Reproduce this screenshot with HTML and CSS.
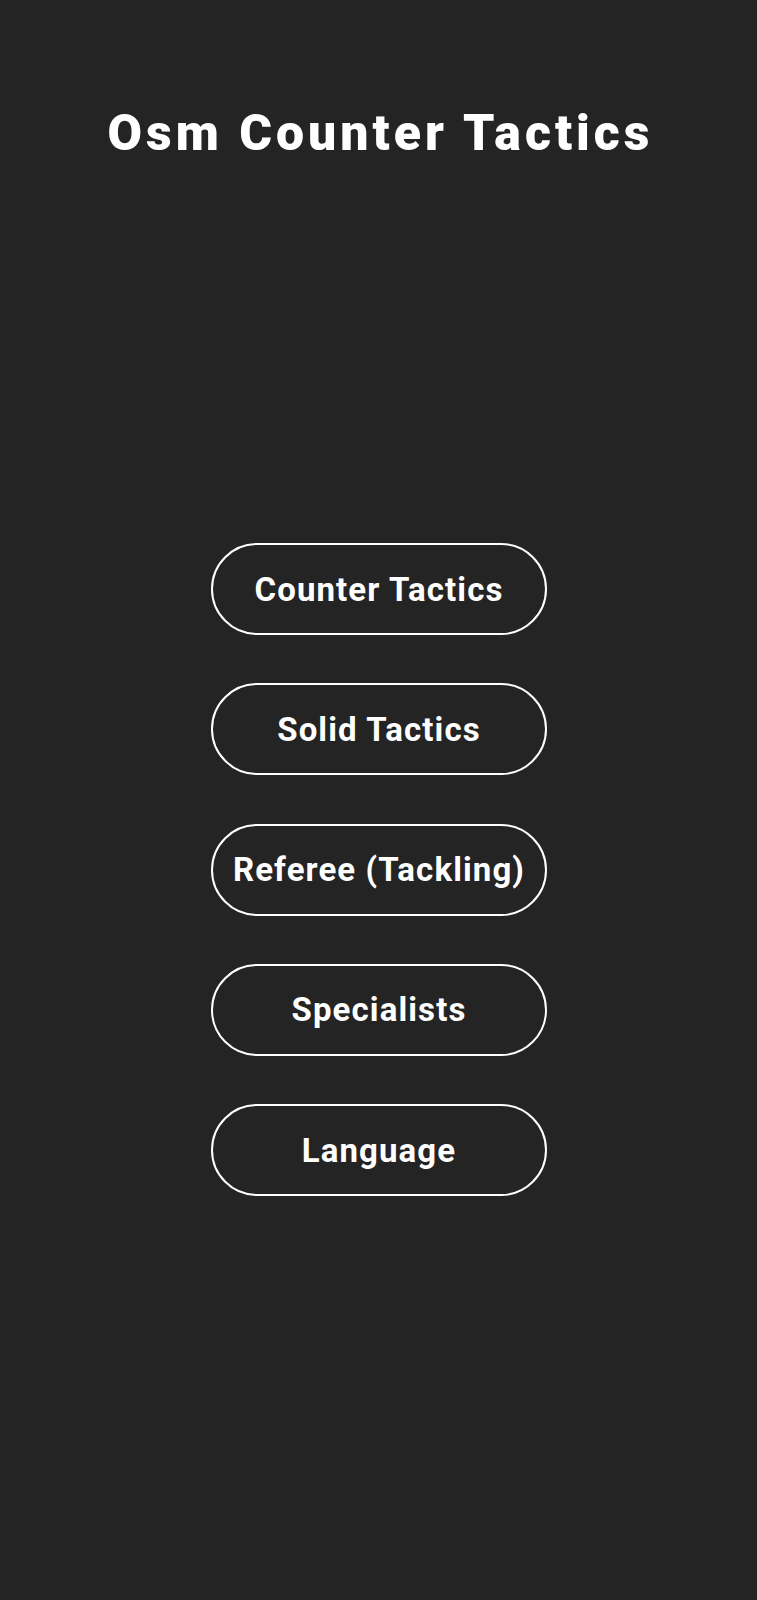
FILE: index.html
```html
<!DOCTYPE html>
<html lang="en">
<head>
<meta charset="utf-8">
<title>Osm Counter Tactics</title>
<link rel="stylesheet" href="styles.css">
</head>
<body>
<main class="screen">
  <h1 class="title">Osm Counter Tactics</h1>
  <nav class="menu">
    <button class="menu-btn">Counter Tactics</button>
    <button class="menu-btn">Solid Tactics</button>
    <button class="menu-btn">Referee (Tackling)</button>
    <button class="menu-btn">Specialists</button>
    <button class="menu-btn">Language</button>
  </nav>
</main>
</body>
</html>
```

FILE: styles.css
```css
html, body {
  margin: 0;
  padding: 0;
  background: #242424;
}

.screen {
  width: 757px;
  min-height: 1600px;
  display: flex;
  flex-direction: column;
  align-items: center;
  font-family: Roboto, "Liberation Sans", sans-serif;
  color: #ffffff;
}

.title {
  margin: 101px 0 0;
  padding-left: 4px;
  font-size: 50px;
  font-weight: 900;
  letter-spacing: 4px;
  line-height: 64px;
}

.menu {
  margin-top: 378px;
  display: flex;
  flex-direction: column;
  gap: 48.25px;
}

.menu-btn {
  width: 336px;
  height: 92px;
  box-sizing: border-box;
  border: 2px solid #ffffff;
  border-radius: 46px;
  background: transparent;
  color: #ffffff;
  font-family: Roboto, "Liberation Sans", sans-serif;
  font-size: 33px;
  font-weight: 700;
  letter-spacing: 1.1px;
  padding: 0 0 0 1px;
}
```
